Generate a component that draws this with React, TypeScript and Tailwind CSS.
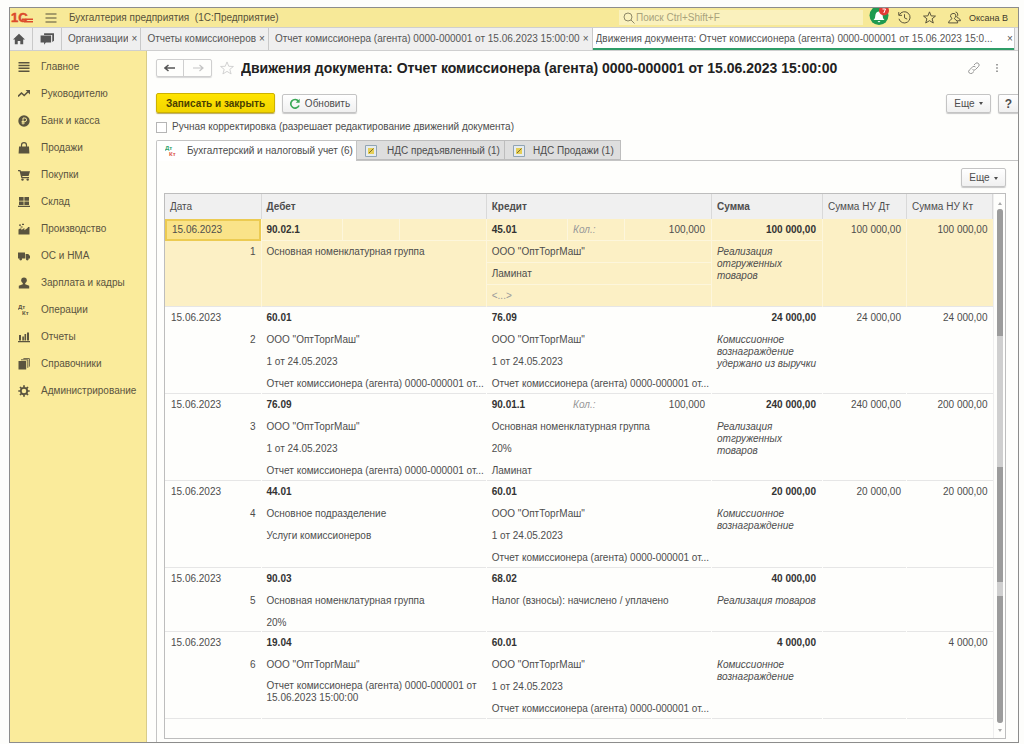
import type { ReactNode } from "react";
import clsx from "clsx";

type Entry = {
  date: string;
  n: number;
  debit: string;
  debitLines: string[];
  credit: string;
  creditQty?: string;
  creditLines: string[];
  sum: string;
  note: string[];
  nuDt?: string;
  nuKt?: string;
  short?: boolean;
};

const REPORT = "Отчет комиссионера (агента) 0000-000001 от...";

const entries: Entry[] = [
  {
    date: "15.06.2023",
    n: 1,
    debit: "90.02.1",
    debitLines: ["Основная номенклатурная группа"],
    credit: "45.01",
    creditQty: "100,000",
    creditLines: ['ООО "ОптТоргМаш"', "Ламинат", "<...>"],
    sum: "100 000,00",
    note: ["Реализация", "отгруженных", "товаров"],
    nuDt: "100 000,00",
    nuKt: "100 000,00",
  },
  {
    date: "15.06.2023",
    n: 2,
    debit: "60.01",
    debitLines: ['ООО "ОптТоргМаш"', "1 от 24.05.2023", REPORT],
    credit: "76.09",
    creditLines: ['ООО "ОптТоргМаш"', "1 от 24.05.2023", REPORT],
    sum: "24 000,00",
    note: ["Комиссионное", "вознаграждение", "удержано из выручки"],
    nuDt: "24 000,00",
    nuKt: "24 000,00",
  },
  {
    date: "15.06.2023",
    n: 3,
    debit: "76.09",
    debitLines: ['ООО "ОптТоргМаш"', "1 от 24.05.2023", REPORT],
    credit: "90.01.1",
    creditQty: "100,000",
    creditLines: ["Основная номенклатурная группа", "20%", "Ламинат"],
    sum: "240 000,00",
    note: ["Реализация", "отгруженных", "товаров"],
    nuDt: "240 000,00",
    nuKt: "200 000,00",
  },
  {
    date: "15.06.2023",
    n: 4,
    debit: "44.01",
    debitLines: ["Основное подразделение", "Услуги комиссионеров"],
    credit: "60.01",
    creditLines: ['ООО "ОптТоргМаш"', "1 от 24.05.2023", REPORT],
    sum: "20 000,00",
    note: ["Комиссионное", "вознаграждение"],
    nuDt: "20 000,00",
    nuKt: "20 000,00",
  },
  {
    date: "15.06.2023",
    n: 5,
    debit: "90.03",
    debitLines: ["Основная номенклатурная группа", "20%"],
    credit: "68.02",
    creditLines: ["Налог (взносы): начислено / уплачено"],
    sum: "40 000,00",
    note: ["Реализация товаров"],
    short: true,
  },
  {
    date: "15.06.2023",
    n: 6,
    debit: "19.04",
    debitLines: ['ООО "ОптТоргМаш"', "Отчет комиссионера (агента) 0000-000001 от 15.06.2023 15:00:00"],
    credit: "60.01",
    creditLines: ['ООО "ОптТоргМаш"', "1 от 24.05.2023", REPORT],
    sum: "4 000,00",
    note: ["Комиссионное", "вознаграждение"],
    nuKt: "4 000,00",
  },
];

function Icon({ children, className = "h-3 w-3" }: { children: ReactNode; className?: string }) {
  return (
    <svg viewBox="0 0 12 12" className={clsx("shrink-0", className)} fill="currentColor" aria-hidden="true">
      {children}
    </svg>
  );
}

const DtKt = ({ dt, kt }: { dt: string; kt: string }) => (
  <>
    <text x="0" y="5" fontSize="6" fontWeight="bold" fill={dt}>Дт</text>
    <text x="4" y="11" fontSize="6" fontWeight="bold" fill={kt}>Кт</text>
  </>
);

const menu: { label: string; icon: ReactNode }[] = [
  { label: "Главное", icon: <path d="M.5 1h11v1.5H.5zM.5 3.8h11v1.5H.5zM.5 6.6h11v1.5H.5zM.5 9.4h11v1.5H.5z" /> },
  {
    label: "Руководителю",
    icon: (
      <>
        <path d="M0 8.5 3.5 5l2.7 2.5L10 3.8" fill="none" stroke="currentColor" strokeWidth="1.6" />
        <path d="M7.6 2H12v4.4z" />
      </>
    ),
  },
  {
    label: "Банк и касса",
    icon: (
      <>
        <circle cx="6" cy="6" r="5.7" />
        <path d="M5 9.5V3h1.8a1.7 1.7 0 0 1 0 3.6H3.6M3.6 8h3.2" fill="none" stroke="#faeb9b" strokeWidth="1" />
      </>
    ),
  },
  {
    label: "Продажи",
    icon: (
      <>
        <path d="M1 4.5h10l.4 7H.6z" />
        <path d="M3.5 6V3.2a2.5 2.5 0 0 1 5 0V6" fill="none" stroke="currentColor" strokeWidth="1.2" />
      </>
    ),
  },
  {
    label: "Покупки",
    icon: (
      <>
        <path d="M0 1h2.4l.5 1.3H12L10.6 7H4.2l.3 1H11v1.2H3.4L1.6 2.2H0z" />
        <circle cx="4.5" cy="10.6" r="1.2" />
        <circle cx="9.7" cy="10.6" r="1.2" />
      </>
    ),
  },
  { label: "Склад", icon: <path d="M1 1h4.6v3.7H1zM6.4 1H11v3.7H6.4zM1 5.4h4.6V9H1zM6.4 5.4H11V9H6.4zM0 9.8h12V11H0z" /> },
  {
    label: "Производство",
    icon: <path d="M.5 11.5v-5L2 5.5h1.4V7l3-2v2.2L9.6 5l.4-1h1.5v7.5zM1 1.5h2v1.3H1zM4 .8h2v1.3H4zM2.6 3.4h2v1.2h-2z" />,
  },
  {
    label: "ОС и НМА",
    icon: (
      <>
        <path d="M0 2.5h7v6H0zM7.6 4h2.6L12 6v2.5H7.6z" />
        <circle cx="2.7" cy="9" r="1.4" />
        <circle cx="9.3" cy="9" r="1.4" />
      </>
    ),
  },
  {
    label: "Зарплата и кадры",
    icon: (
      <>
        <circle cx="6" cy="3.3" r="2.8" />
        <path d="M4.8 5.5h2.4v1.7l4 1.5v2.8H.8V8.7l4-1.5z" />
      </>
    ),
  },
  { label: "Операции", icon: <DtKt dt="#5a543f" kt="#5a543f" /> },
  { label: "Отчеты", icon: <path d="M0 10h12v1.2H0zM1 4h2v5.5H1zM4.3 5.5h1.6v4H4.3zM6.5 3h1.6v6.5H6.5zM9 1.5h2v8H9z" /> },
  {
    label: "Справочники",
    icon: (
      <>
        <path d="M.5 3h7.7v8.5H.5z" />
        <path d="M3 1.8h6.8v8M5.4.6h6v8" fill="none" stroke="currentColor" strokeWidth=".9" />
      </>
    ),
  },
  {
    label: "Администрирование",
    icon: (
      <>
        <circle cx="6" cy="6" r="3.2" fill="none" stroke="currentColor" strokeWidth="1.8" />
        <path
          d="M6 .3v2M6 9.7v2M.3 6h2M9.7 6h2M2 2l1.4 1.4M8.6 8.6 10 10M2 10l1.4-1.4M8.6 3.4 10 2"
          stroke="currentColor"
          strokeWidth="1.7"
        />
      </>
    ),
  },
];

const STAR = "M6 .8 7.5 4.5l4 .2-3.1 2.5 1.1 3.9L6 8.9l-3.5 2.2 1.1-3.9L.5 4.7l4-.2z";

function TitleBar() {
  return (
    <header className="flex h-[19px] shrink-0 items-center bg-[#f7e998] text-[#57513a]">
      <svg viewBox="0 0 23 14" className="h-[14px] w-[23px] shrink-0" role="img" aria-label="1С">
        <text x="1" y="11" fontSize="13" fontWeight="bold" fill="#dc4a2c" stroke="#dc4a2c" strokeWidth=".5">1С</text>
        <path d="M12 8.2h11M14 10.7h9" stroke="#dc4a2c" strokeWidth="1.4" />
      </svg>
      <button type="button" aria-label="Меню" className="ml-3">
        <Icon>
          <path d="M.5 1.5h11v1H.5zM.5 5.5h11v1H.5zM.5 9.5h11v1H.5z" />
        </Icon>
      </button>
      <span className="ml-3 whitespace-pre">Бухгалтерия предприятия  (1С:Предприятие)</span>
      <label className="ml-auto flex h-[15px] w-[244px] items-center bg-[#faf1bd] pl-1 text-[#8e8867]">
        <Icon>
          <circle cx="5" cy="5" r="4" fill="none" stroke="currentColor" />
          <path d="m8 8 3.5 3.5" stroke="currentColor" />
        </Icon>
        <input
          type="search"
          aria-label="Поиск"
          placeholder="Поиск Ctrl+Shift+F"
          className="ml-px min-w-0 flex-1 bg-transparent outline-none placeholder:text-[#a8a27c]"
        />
      </label>
      <button type="button" aria-label="Уведомления" className="ml-[6px] self-stretch">
        <svg viewBox="0 0 20 19" className="h-[19px] w-5">
          <circle cx="10" cy="7.5" r="9.5" fill="#1f9a50" />
          <path d="M4.5 12c2-1.5 1.5-3.5 2-5.5C7 4.5 8.3 3.5 10 3.5s3 1 3.5 3c.5 2 0 4 2 5.5z" fill="#fff" />
          <path d="M8.5 13h3L10 14.5z" fill="#fff" />
          <circle cx="15" cy="2.5" r="5" fill="#e23b35" />
          <path d="M13.5 1h3l-1.7 4" fill="none" stroke="#fff" />
        </svg>
      </button>
      <button type="button" aria-label="История" className="ml-[9px]">
        <Icon className="h-[13px] w-[13px]">
          <path d="M1.3 3.5a5.2 5.2 0 1 1-.4 3.7M.7 1v3h3M6 3v3.3l2.5 1.2" fill="none" stroke="currentColor" strokeWidth=".9" />
        </Icon>
      </button>
      <button type="button" aria-label="Избранное" className="ml-3">
        <Icon className="h-[13px] w-[13px]">
          <path d={STAR} fill="none" stroke="currentColor" strokeWidth=".9" />
        </Icon>
      </button>
      <button type="button" aria-label="Пользователь" className="ml-3">
        <Icon className="h-[13px] w-[13px]">
          <path
            d="M7 1a2 2.3 0 0 1 1 4.3c0 1.2 3.3 1 3.5 3.7H8.5M4.6 2.3a2 2.3 0 0 1 1.2 4.4c0 1.4 3 1.3 3.2 4.3H.5c.2-3 3.2-2.6 3.2-4.3a2.3 2.3 0 0 1 .9-4.4z"
            fill="none"
            stroke="currentColor"
            strokeWidth=".9"
          />
        </Icon>
      </button>
      <span className="mr-[10px] ml-2 text-[9px] whitespace-nowrap text-[#3f3b2c]">Оксана В</span>
    </header>
  );
}

function WindowTab({ label, active = false }: { label: string; active?: boolean }) {
  return (
    <div
      className={clsx(
        "flex items-center border-r border-[#c9c9c9]",
        active ? "min-w-0 flex-1 bg-white" : "shrink-0 pr-[2px] pl-[6px]"
      )}
    >
      <div
        className={clsx(
          "flex h-full min-w-0 flex-1 items-center gap-[2px] border-b-2 pt-[2px]",
          active ? "border-[#2f9d68] pl-[3px]" : "border-transparent"
        )}
      >
        <a href="#" className="min-w-0 flex-1 truncate">{label}</a>
        <button type="button" aria-label="Закрыть" className="w-2 text-center">×</button>
      </div>
    </div>
  );
}

function WindowTabs() {
  return (
    <nav className="flex h-6 shrink-0 border-y border-[#cfcfcf] bg-[#efefef] text-[#555]">
      <button type="button" aria-label="Начальная страница" className="flex w-[23px] shrink-0 items-center border-r border-[#c9c9c9] pl-[3px]">
        <Icon>
          <path d="M6 .8 12 6.5h-1.8v4.7H7.3V8H4.7v3.2H1.8V6.5H0z" />
        </Icon>
      </button>
      <button type="button" aria-label="Окна" className="flex w-[29px] shrink-0 items-center justify-center border-r border-[#c9c9c9]">
        <Icon className="h-[14px] w-[14px]">
          <path d="M3.5 1H12v6.5l-1.5 1V2.5h-7zM.5 3h9v6H5l-1.5 2V9h-3z" />
        </Icon>
      </button>
      <WindowTab label="Организации" />
      <WindowTab label="Отчеты комиссионеров" />
      <WindowTab label="Отчет комиссионера (агента) 0000-000001 от 15.06.2023 15:00:00" />
      <WindowTab label="Движения документа: Отчет комиссионера (агента) 0000-000001 от 15.06.2023 15:0..." active />
      <div className="w-[3px] shrink-0" />
    </nav>
  );
}

function Sidebar() {
  return (
    <aside className="w-[137px] shrink-0 border-r border-[#d8cc8a] bg-[#faeb9b] pt-[2px] text-[#5a543f]">
      {menu.map((item) => (
        <a key={item.label} href="#" className="flex h-[27px] items-center gap-[11px] pl-2 whitespace-nowrap">
          <Icon>{item.icon}</Icon>
          {item.label}
        </a>
      ))}
    </aside>
  );
}

const btn =
  "flex h-[19px] shrink-0 items-center justify-center rounded-xs border border-[#c4c4c4] bg-linear-to-b from-white to-[#f0f0f0] pt-px whitespace-nowrap shadow-[0_1px_1px_#c8c8c8]";

function MoreButton() {
  return (
    <button type="button" className={clsx(btn, "w-[45px] gap-1")}>
      Еще
      <svg viewBox="0 0 4 3" className="h-[3px] w-1" fill="currentColor" aria-hidden="true">
        <path d="M0 0h4L2 3z" />
      </svg>
    </button>
  );
}

function DocHeader() {
  return (
    <>
      <div className="flex h-[34px] items-center">
        <div className="flex h-[18px] rounded-xs border border-[#cfcfcf] shadow-[0_1px_1px_#d8d8d8]">
          <button type="button" aria-label="Назад" className="flex w-[27px] items-center justify-center border-r border-[#cfcfcf]">
            <Icon>
              <path d="M1 6h10M4.5 3 1 6l3.5 3" fill="none" stroke="#555" strokeWidth="1.5" />
            </Icon>
          </button>
          <button type="button" aria-label="Вперед" className="flex w-[27px] items-center justify-center">
            <Icon>
              <path d="M1 6h10M7.5 3 11 6 7.5 9" fill="none" stroke="#c4c4c4" strokeWidth="1.2" />
            </Icon>
          </button>
        </div>
        <button type="button" aria-label="В избранное" className="ml-2">
          <Icon className="h-[14px] w-[14px]">
            <path d={STAR} fill="none" stroke="#cfcfcf" strokeWidth=".8" />
          </Icon>
        </button>
        <h1 className="ml-[7px] min-w-0 flex-1 truncate text-[14px] leading-5 font-bold text-[#222]">
          Движения документа: Отчет комиссионера (агента) 0000-000001 от 15.06.2023 15:00:00
        </h1>
        <button type="button" aria-label="Ссылка">
          <Icon>
            <path
              d="M4.5 7.5a2 2 0 0 0 3 0l3-3a2 2 0 0 0-3-3L6 3M7.5 5a2 2 0 0 0-3 0L1.3 8a2 2 0 0 0 3 3L6 9.5"
              fill="none"
              stroke="#8a8a8a"
              strokeWidth=".9"
            />
          </Icon>
        </button>
        <button type="button" aria-label="Дополнительно" className="mr-[15px] ml-[11px]">
          <Icon>
            <path d="M5.3 2h1.4v1.5H5.3zM5.3 5.3h1.4v1.5H5.3zM5.3 8.6h1.4v1.5H5.3z" fill="#777" />
          </Icon>
        </button>
      </div>

      <div className="mt-2 flex items-center">
        <button
          type="button"
          className="flex h-5 w-[119px] items-center justify-center rounded-xs border border-[#cdb200] bg-linear-to-b from-[#ffe400] to-[#f2d500] pt-px font-bold whitespace-nowrap text-[#4a4000] shadow-[0_1px_1px_#b8a860]"
        >
          Записать и закрыть
        </button>
        <button type="button" className={clsx(btn, "ml-[7px] w-[75px] gap-1")}>
          <Icon>
            <path d="M9.5 3.2A4.3 4.3 0 1 0 10 7.5" fill="none" stroke="#3aa856" strokeWidth="1.7" />
            <path d="M6.7 4.7h4V.8z" fill="#3aa856" />
          </Icon>
          Обновить
        </button>
        <div className="ml-auto flex gap-[7px]">
          <MoreButton />
          <button type="button" aria-label="Справка" className={clsx(btn, "w-5 rounded-r-none border-r-0 text-[12px] font-bold")}>
            ?
          </button>
        </div>
      </div>

      <label className="mt-[6px] flex h-4 items-center gap-[5px]">
        <input type="checkbox" className="h-[11px] w-[11px] appearance-none border border-[#b5b5b5] bg-white" />
        Ручная корректировка (разрешает редактирование движений документа)
      </label>
    </>
  );
}

function SheetIcon() {
  return (
    <Icon>
      <path d="M.5.5h11v11H.5z" fill="#e6ecf0" stroke="#90a4b4" />
      <path d="M3 3h6v6H3z" fill="#e5cf57" />
      <path d="M4 8 8.5 3.5" stroke="#7a6a2c" />
    </Icon>
  );
}

function RegisterTabs() {
  return (
    <div className="mt-[5px] flex h-5 whitespace-nowrap">
      <button
        type="button"
        className="z-10 -mb-px flex w-[201px] items-center gap-[10px] rounded-tl-xs border border-b-0 border-[#c4c4c4] bg-white pl-2"
      >
        <Icon>
          <DtKt dt="#2fa36b" kt="#dd5548" />
        </Icon>
        Бухгалтерский и налоговый учет (6)
      </button>
      <button type="button" className="flex w-[148px] items-center gap-[10px] border-y border-r border-[#bdbdbd] bg-[#dedede] pt-px pl-2">
        <SheetIcon />
        НДС предъявленный (1)
      </button>
      <button type="button" className="flex w-[116px] items-center gap-2 border-y border-r border-[#bdbdbd] bg-[#dedede] pt-px pl-2">
        <SheetIcon />
        НДС Продажи (1)
      </button>
    </div>
  );
}

function AccountCell({ account, qty, lines, selected, split }: {
  account: string;
  qty?: string;
  lines: string[];
  selected: boolean;
  split?: boolean;
}) {
  const rule = selected ? "border-[#fdf6dc]" : "border-transparent";
  return (
    <td className={clsx("border-r p-0 align-top", rule)}>
      <div className={clsx("flex h-[22px] border-b leading-[22px]", rule)}>
        <b className="flex-1 pl-[5px] text-[#333]">{account}</b>
        <i className={clsx("w-[58px] border-x pl-[5px] text-[#999]", rule)}>{qty && "Кол.:"}</i>
        <span className="w-[86px] pr-[6px] text-right">{qty}</span>
      </div>
      {lines.map((line, i) => (
        <div
          key={i}
          className={clsx(
            "pl-[5px]",
            i === lines.length - 1 ? "h-[19px]" : "h-[22px]",
            split && i < 2 && "border-b",
            rule,
            line === "<...>" && "text-[#999]",
            // a long debit document name is wrapped, everything else fits one line
            line.length > 50 ? "pt-1 leading-3" : "leading-[22px] whitespace-nowrap"
          )}
        >
          {line}
        </div>
      ))}
    </td>
  );
}

function EntryRow({ entry, selected }: { entry: Entry; selected: boolean }) {
  const rule = selected ? "border-[#fdf6dc]" : "border-transparent";
  return (
    <tr className={clsx("border-b border-[#e6e6e6]", entry.short ? "h-[64px]" : "h-[87px]", selected && "bg-[#fcf0c5]")}>
      <td className={clsx("border-r p-0 align-top", rule)}>
        <div
          className={clsx(
            "flex h-[22px] items-center border pl-[5px]",
            selected ? "border-2 border-[#eccb52] bg-[#fae389] pl-1" : "border-transparent"
          )}
        >
          {entry.date}
        </div>
        <div className="pr-[5px] text-right leading-[22px]">{entry.n}</div>
      </td>
      <AccountCell account={entry.debit} lines={entry.debitLines} selected={selected} />
      <AccountCell account={entry.credit} qty={entry.creditQty} lines={entry.creditLines} selected={selected} split={selected} />
      <td className={clsx("border-r p-0 align-top", rule)}>
        <div className={clsx("h-[22px] border-b pr-[6px] text-right leading-[22px] font-bold text-[#333]", rule)}>{entry.sum}</div>
        <p className="pt-[5px] pl-[5px] leading-3 whitespace-nowrap italic">
          {entry.note.map((t) => (
            <span key={t} className="block">{t}</span>
          ))}
        </p>
      </td>
      <td className={clsx("border-r p-0 pr-[5px] text-right align-top leading-[22px]", rule)}>{entry.nuDt}</td>
      <td className="p-0 pr-[5px] text-right align-top leading-[22px]">{entry.nuKt}</td>
    </tr>
  );
}

function Scrollbar() {
  return (
    <div aria-hidden="true" className="flex w-3 shrink-0 flex-col items-center border-l border-[#eee] text-[#aaa]">
      <svg viewBox="0 0 4 3" className="mt-2 h-[3px] w-1 shrink-0" fill="currentColor">
        <path d="M0 3h4L2 0z" />
      </svg>
      <div className="mt-1 flex w-[6px] flex-1 flex-col rounded-full bg-[#cfcfcf]">
        <div className="h-[127px] rounded-t-full bg-[#9c9c9c]" />
        <div className="mt-[131px] h-[115px] bg-[#9c9c9c]" />
        <div className="mt-[14px] flex-1 rounded-b-full bg-[#9c9c9c]" />
      </div>
      <svg viewBox="0 0 4 3" className="my-[6px] h-[3px] w-1 shrink-0" fill="currentColor">
        <path d="M0 0h4L2 3z" />
      </svg>
    </div>
  );
}

function EntriesTable() {
  const th = "border-r border-[#d9d9d9] px-[5px] text-left";
  return (
    <div className="mt-[6px] flex flex-1 border border-[#bdbdbd]">
      <div className="min-w-0 flex-1">
        <table className="w-full table-fixed border-collapse">
          <colgroup>
            <col className="w-[96px]" />
            <col />
            <col />
            <col className="w-[111px]" />
            <col className="w-[84px]" />
            <col className="w-[86px]" />
          </colgroup>
          <thead>
            <tr className="h-[25px] bg-[#f0f0f0]">
              <th className={clsx(th, "font-normal")}>Дата</th>
              <th className={th}>Дебет</th>
              <th className={th}>Кредит</th>
              <th className={th}>Сумма</th>
              <th className={clsx(th, "font-normal")}>Сумма НУ Дт</th>
              <th className={clsx(th, "font-normal")}>Сумма НУ Кт</th>
            </tr>
          </thead>
          <tbody>
            {entries.map((e) => (
              <EntryRow key={e.n} entry={e} selected={e.n === 1} />
            ))}
          </tbody>
        </table>
      </div>
      <Scrollbar />
    </div>
  );
}

export default function App() {
  return (
    <div className="flex min-h-screen bg-[#fdfdfb] pt-[7px] pr-[5px] pb-px pl-[9px] font-['Liberation_Sans',Arial,sans-serif] text-[10px] leading-3 text-[#4d4d4d]">
      <div className="flex min-w-0 flex-1 flex-col border border-[#8c8c8c]">
        <TitleBar />
        <WindowTabs />
        <div className="flex flex-1">
          <Sidebar />
          <main className="flex min-w-0 flex-1 flex-col bg-[#fefefc] pl-[9px]">
            <DocHeader />
            <RegisterTabs />
            <section className="flex flex-1 flex-col border-t border-l border-[#c4c4c4] pt-[7px] pr-3 pb-[3px] pl-[7px]">
              <div className="flex justify-end">
                <MoreButton />
              </div>
              <EntriesTable />
            </section>
          </main>
        </div>
      </div>
    </div>
  );
}
